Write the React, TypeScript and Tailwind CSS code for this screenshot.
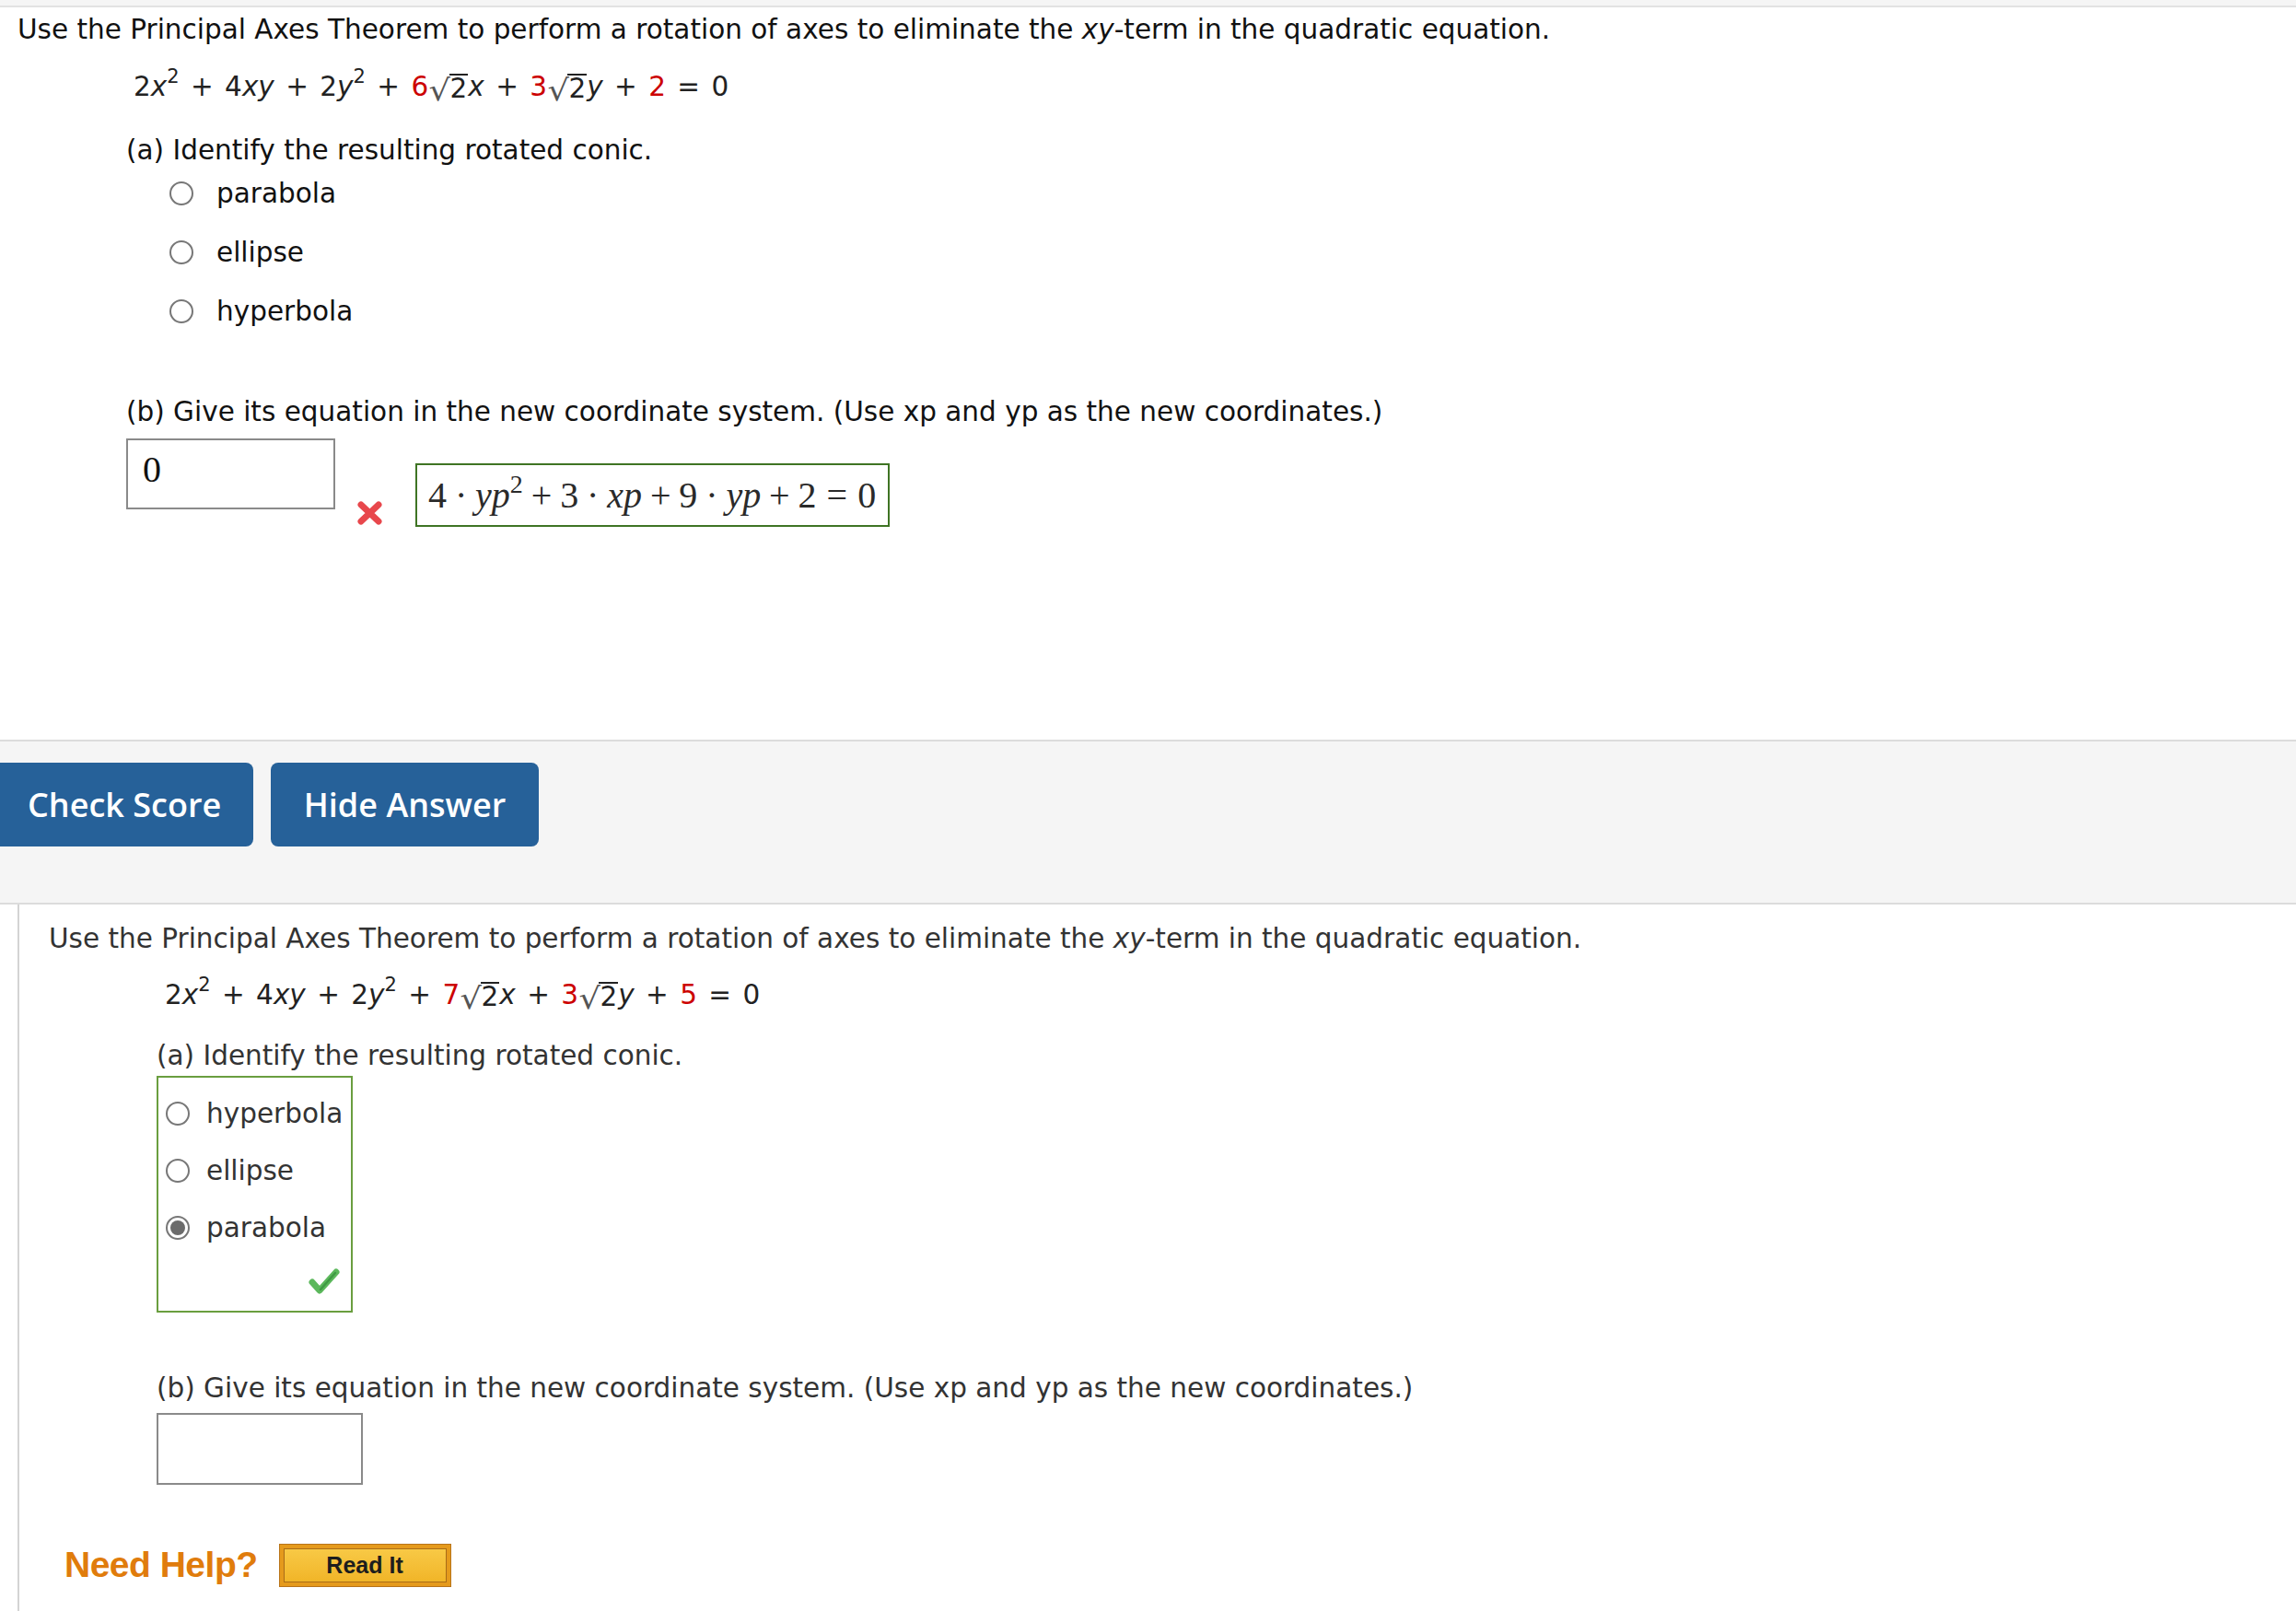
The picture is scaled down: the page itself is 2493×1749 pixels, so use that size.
import React from 'react';

const sans = { fontFamily: '"DejaVu Sans", Verdana, sans-serif' };

// red coefficient in the equations
const R = ({ children }: { children: React.ReactNode }) => <span className="text-[#cc0000]">{children}</span>;

const Sqrt2 = () => (
    <span className="inline-flex items-start ml-[2px]">
        <span className="text-[#555] text-[32px] leading-[40px] inline-block translate-y-[4px] scale-x-[1.15]">√</span>
        <span className="border-t-2 border-[#222] leading-[28px] mt-[6px] px-[1px]">2</span>
    </span>
);

const Sup = ({ children }: { children: React.ReactNode }) => (
    <span className="text-[21px] relative -top-[11px] leading-none">{children}</span>
);

const Equation = ({ a, b, c }: { a: string; b: string; c: string }) => (
    <div className="h-[40px] flex items-center text-[29.5px] whitespace-pre text-[#222] [word-spacing:3px]">
        2<i>x</i>
        <Sup>2</Sup> + 4<i>xy</i> + 2<i>y</i>
        <Sup>2</Sup> + <R>{a}</R>
        <Sqrt2 />
        <i>x</i> + <R>{b}</R>
        <Sqrt2 />
        <i>y</i> + <R>{c}</R> = 0
    </div>
);

const Radio = ({ checked = false }: { checked?: boolean }) => (
    <span className="w-[26px] h-[26px] rounded-full border-2 border-[#777] bg-white flex items-center justify-center shrink-0">
        {checked && <span className="w-[16px] h-[16px] rounded-full bg-[#6b6b6b]" />}
    </span>
);

const Op = ({ children, wide = false }: { children: React.ReactNode; wide?: boolean }) => (
    <span className={wide ? 'mx-[0.278em] not-italic' : 'mx-[0.222em] not-italic'}>{children}</span>
);

export default function App() {
    return (
        <div className="w-full min-h-[1749px] bg-white overflow-hidden" style={sans}>
            <div className="h-[8px] bg-[#f5f5f5] border-b-2 border-[#e2e2e2]" />

            {/* first question (answered) */}
            <div className="pl-[19px]">
                <div className="mt-[4px] h-[40px] flex items-center text-[29.5px] text-[#111] whitespace-pre">
                    Use the Principal Axes Theorem to perform a rotation of axes to eliminate the <i>xy</i>-term in the quadratic equation.
                </div>
                <div className="mt-[22px] pl-[126px]">
                    <Equation a="6" b="3" c="2" />
                </div>
                <div className="pl-[118px]">
                    <div className="mt-[31px] h-[36px] flex items-center text-[29.5px] text-[#111]">(a) Identify the resulting rotated conic.</div>
                    <div className="pl-[47px] -mt-[3px]">
                        {['parabola', 'ellipse', 'hyperbola'].map((o) => (
                            <div key={o} className="h-[64px] flex items-center gap-[25px] text-[29.5px] text-[#111]">
                                <Radio />
                                <span>{o}</span>
                            </div>
                        ))}
                    </div>
                    <div className="mt-[57px] h-[40px] flex items-center text-[29.5px] text-[#111]">
                        (b) Give its equation in the new coordinate system. (Use xp and yp as the new coordinates.)
                    </div>
                    <div className="mt-[9px] flex items-start">
                        <div className="w-[227px] h-[77px] border-2 border-[#8a8a8a] pl-[16px] pt-[12px] text-[40px] leading-[40px] text-[#111]" style={{ fontFamily: '"Liberation Serif", serif' }}>
                            0
                        </div>
                        <svg className="ml-[22px] mt-[67px]" width="31" height="28" viewBox="0 0 31 28">
                            <path d="M6 5 L25 23 M25 5 L6 23" stroke="#e8474c" strokeWidth="7" strokeLinecap="round" />
                        </svg>
                        <div
                            className="ml-[34px] mt-[27px] w-[515px] h-[69px] border-2 border-[#3f7424] flex items-center pl-[12px] text-[40px] text-[#2a2a2a] whitespace-pre"
                            style={{ fontFamily: '"Liberation Serif", serif' }}
                        >
                            4<Op>·</Op>
                            <i>yp</i>
                            <span className="text-[28px] relative -top-[12px] leading-none">2</span>
                            <Op>+</Op>3<Op>·</Op>
                            <i>xp</i>
                            <Op>+</Op>9<Op>·</Op>
                            <i>yp</i>
                            <Op>+</Op>2<Op wide>=</Op>0
                        </div>
                    </div>
                </div>
            </div>

            {/* score bar */}
            <div className="mt-[231px] border-t-2 border-b-2 border-[#dcdcdc] bg-[#f5f5f5] pt-[23px] pb-[61px] flex gap-[19px] -ml-[16px]" style={{ fontFamily: '"Open Sans", sans-serif' }}>
                <button className="w-[291px] h-[91px] rounded-[8px] bg-[#266199] text-white text-[36px] font-semibold pl-[46px] text-left">Check Score</button>
                <button className="w-[291px] h-[91px] rounded-[8px] bg-[#266199] text-white text-[36px] font-semibold">Hide Answer</button>
            </div>

            {/* second question */}
            <div className="ml-[19px] border-l-2 border-[#d4d4d4] pl-[32px] pb-[40px]">
                <div className="pt-[17px] h-[57px] flex items-end">
                    <div className="h-[40px] flex items-center text-[29.5px] text-[#333] whitespace-pre">
                        Use the Principal Axes Theorem to perform a rotation of axes to eliminate the <i>xy</i>-term in the quadratic equation.
                    </div>
                </div>
                <div className="mt-[21px] pl-[126px]">
                    <Equation a="7" b="3" c="5" />
                </div>
                <div className="pl-[117px]">
                    <div className="mt-[28px] h-[36px] flex items-center text-[29.5px] text-[#333]">(a) Identify the resulting rotated conic.</div>
                    <div className="mt-[4px] w-[213px] h-[257px] border-2 border-[#6a9e3f] flex flex-col pt-[8px] pl-[8px]">
                        {['hyperbola', 'ellipse', 'parabola'].map((o) => (
                            <div key={o} className="h-[62px] flex items-center gap-[18px] text-[29.5px] text-[#333]">
                                <Radio checked={o === 'parabola'} />
                                <span>{o}</span>
                            </div>
                        ))}
                        <div className="flex justify-end pr-[12px] mt-[12px]">
                            <svg width="34" height="30" viewBox="0 0 34 30">
                                <path d="M4 16 L12 25 L30 5" fill="none" stroke="#5cb85c" strokeWidth="7" strokeLinecap="round" strokeLinejoin="round" />
                                <path d="M13 24 L29 6" fill="none" stroke="#3f9a44" strokeWidth="2.5" strokeLinecap="round" />
                            </svg>
                        </div>
                    </div>
                    <div className="mt-[62px] h-[40px] flex items-center text-[29.5px] text-[#333]">
                        (b) Give its equation in the new coordinate system. (Use xp and yp as the new coordinates.)
                    </div>
                    <div className="mt-[7px] w-[224px] h-[78px] border-2 border-[#8a8a8a]" />
                </div>
                <div className="mt-[58px] ml-[17px] flex items-center gap-[23px]" style={{ fontFamily: '"Liberation Sans", Arial, sans-serif' }}>
                    <span className="text-[39px] font-bold text-[#e07c0c] tracking-[-0.5px]">Need Help?</span>
                    <div className="w-[187px] h-[47px] bg-[#e59a1c] border border-[#b8741a] p-[4px]">
                        <div className="w-full h-full border border-[#a96c18] bg-gradient-to-b from-[#f8c945] to-[#f1b527] flex items-center justify-center text-[25px] font-bold text-[#1d1d1d]">
                            Read It
                        </div>
                    </div>
                </div>
            </div>
        </div>
    );
}
